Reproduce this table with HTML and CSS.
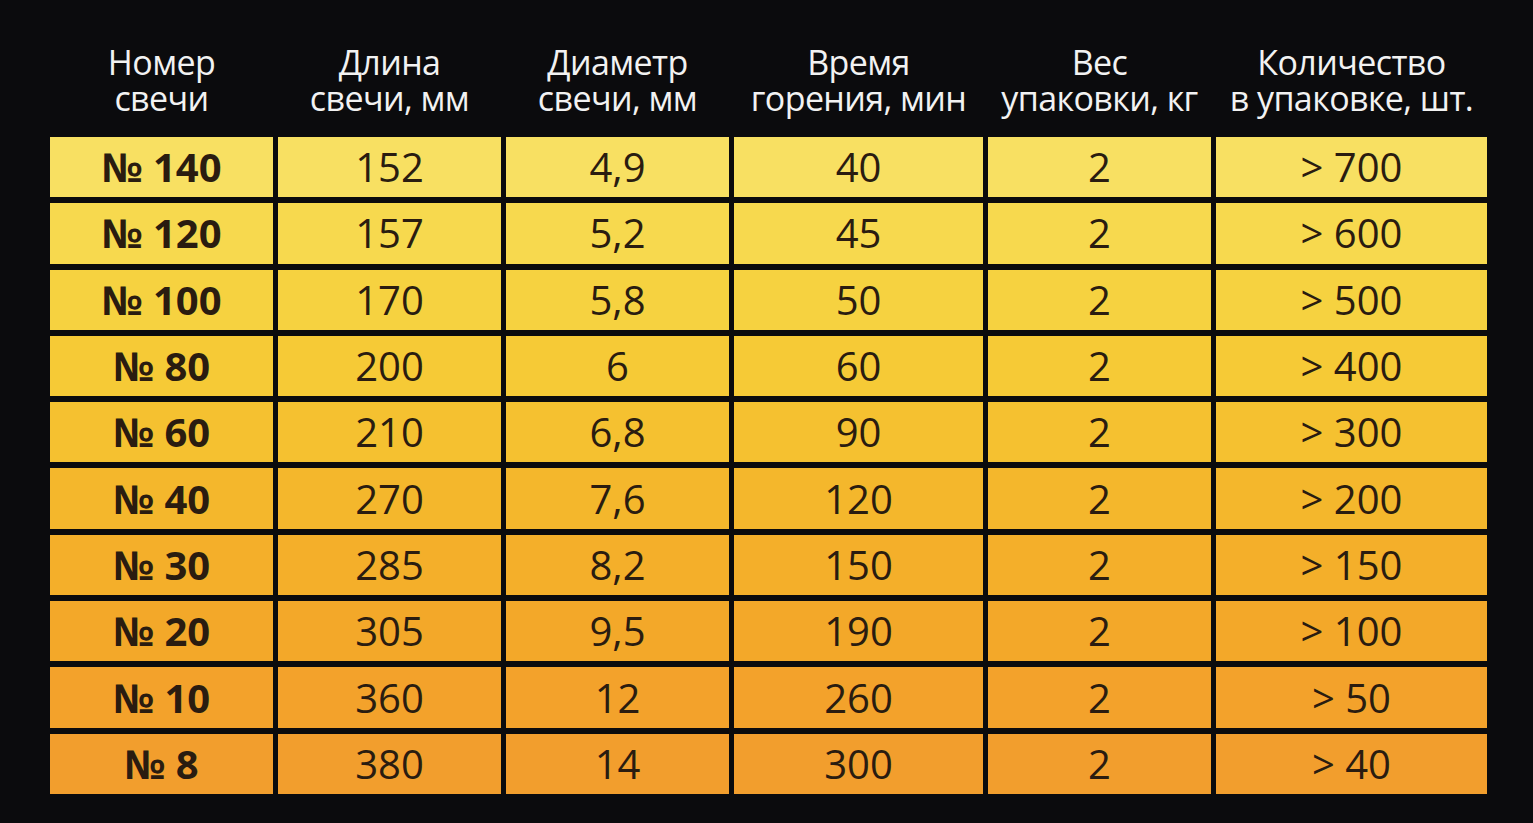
FILE: index.html
```html
<!DOCTYPE html>
<html lang="ru">
<head>
<meta charset="utf-8">
<title>Свечи</title>
<link rel="stylesheet" href="styles.css">
</head>
<body>
<div class="page">
  <div class="grid head">
    <div class="th">Номер<br>свечи</div>
    <div class="th">Длина<br>свечи, мм</div>
    <div class="th">Диаметр<br>свечи, мм</div>
    <div class="th">Время<br>горения, мин</div>
    <div class="th">Вес<br>упаковки, кг</div>
    <div class="th">Количество<br>в упаковке, шт.</div>
  </div>
  <div class="grid body">
    <div class="td num r1">№ 140</div><div class="td r1">152</div><div class="td r1">4,9</div><div class="td r1">40</div><div class="td r1">2</div><div class="td r1">&gt; 700</div>
    <div class="td num r2">№ 120</div><div class="td r2">157</div><div class="td r2">5,2</div><div class="td r2">45</div><div class="td r2">2</div><div class="td r2">&gt; 600</div>
    <div class="td num r3">№ 100</div><div class="td r3">170</div><div class="td r3">5,8</div><div class="td r3">50</div><div class="td r3">2</div><div class="td r3">&gt; 500</div>
    <div class="td num r4">№ 80</div><div class="td r4">200</div><div class="td r4">6</div><div class="td r4">60</div><div class="td r4">2</div><div class="td r4">&gt; 400</div>
    <div class="td num r5">№ 60</div><div class="td r5">210</div><div class="td r5">6,8</div><div class="td r5">90</div><div class="td r5">2</div><div class="td r5">&gt; 300</div>
    <div class="td num r6">№ 40</div><div class="td r6">270</div><div class="td r6">7,6</div><div class="td r6">120</div><div class="td r6">2</div><div class="td r6">&gt; 200</div>
    <div class="td num r7">№ 30</div><div class="td r7">285</div><div class="td r7">8,2</div><div class="td r7">150</div><div class="td r7">2</div><div class="td r7">&gt; 150</div>
    <div class="td num r8">№ 20</div><div class="td r8">305</div><div class="td r8">9,5</div><div class="td r8">190</div><div class="td r8">2</div><div class="td r8">&gt; 100</div>
    <div class="td num r9">№ 10</div><div class="td r9">360</div><div class="td r9">12</div><div class="td r9">260</div><div class="td r9">2</div><div class="td r9">&gt; 50</div>
    <div class="td num r10">№ 8</div><div class="td r10">380</div><div class="td r10">14</div><div class="td r10">300</div><div class="td r10">2</div><div class="td r10">&gt; 40</div>
  </div>
</div>
</body>
</html>
```

FILE: styles.css
```css
html, body {
  margin: 0;
  padding: 0;
  background: #0b0b0d;
  width: 1533px;
  height: 823px;
  overflow: hidden;
}
.page {
  padding: 44px 0 0 50px;
  font-family: "Open Sans", "Liberation Sans", sans-serif;
}
.grid {
  display: grid;
  grid-template-columns: 223px 223px 223px 249px 223px 271px;
  column-gap: 5px;
}
.head {
  margin-bottom: 21px;
}
.th {
  color: #f2f2f2;
  font-size: 34px;
  line-height: 36px;
  text-align: center;
  letter-spacing: -0.6px;
  white-space: nowrap;
}
.body {
  row-gap: 6px;
  grid-auto-rows: 60.3px;
}
.td {
  display: flex;
  align-items: center;
  justify-content: center;
  color: #2a1c10;
  font-size: 40px;
  line-height: 1;
}
.num {
  font-weight: 700;
}
.r1 { background: #f8e062; }
.r2 { background: #f7d94e; }
.r3 { background: #f6d240; }
.r4 { background: #f6ca36; }
.r5 { background: #f5c130; }
.r6 { background: #f4b72c; }
.r7 { background: #f4af2a; }
.r8 { background: #f3a829; }
.r9 { background: #f3a22b; }
.r10 { background: #f29e2d; }
```
